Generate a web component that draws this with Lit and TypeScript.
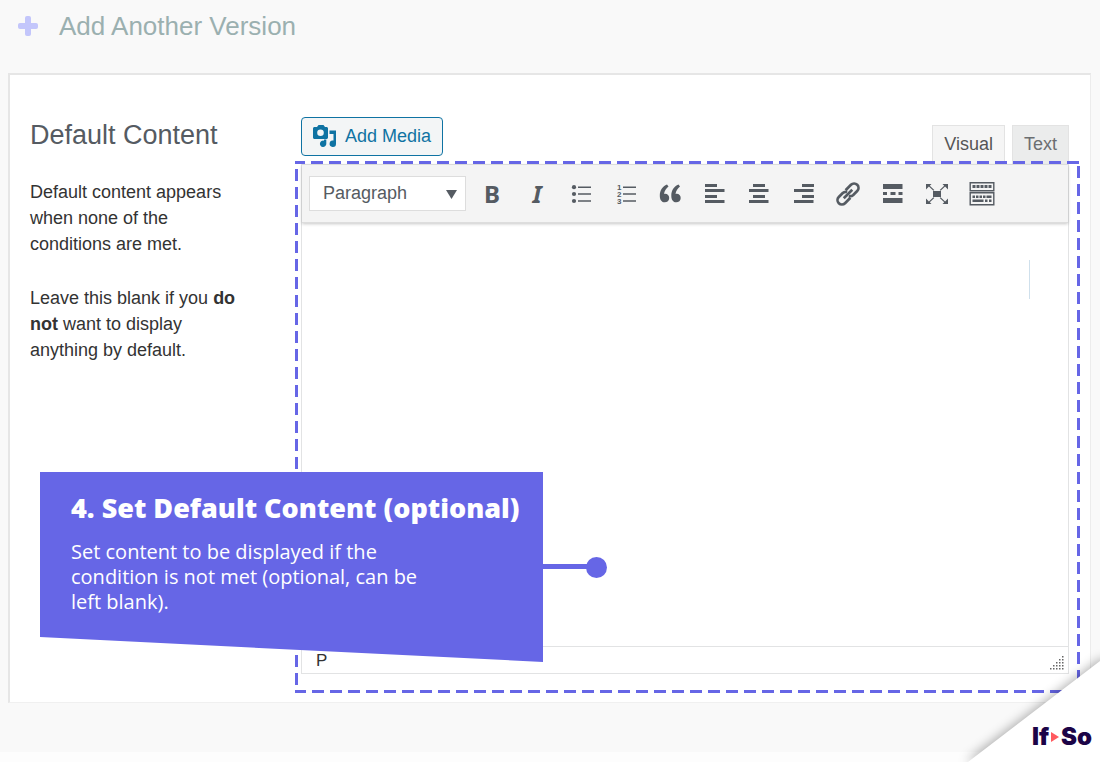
import { LitElement, html, css, svg } from "lit";
import { customElement, state } from "lit/decorators.js";
import { classMap } from "lit/directives/class-map.js";

// Every toolbar icon is drawn around the origin of a 30x30 box.
const alignBars = (shortX: number) => svg`
  <path d="M-10 -5h19.500v3h-19.500zM-10 6h19.500v3h-19.500z"/>
  <rect x=${shortX} y="-10" width="12" height="3"/>
  <rect x=${shortX} y="1" width="12" height="3"/>`;

const lines = svg`<path d="M-3 -7.600h13v1.500h-13zM-3 -.7h13v1.500h-13zM-3 6.300h13v1.500h-13z"/>`;

const quoteMark = svg`<path d="M-1.500 -7.500L-3 -9.500C-7.500 -7.600 -10.200 -3.500 -10.200 1.700C-10.200 5.800 -8.300 8.300 -5.300 8.300C-2.700 8.300 -.8 6.500 -.8 3.900C-.8 1.400 -2.500 -.3 -4.800 -.3C-5.300 -.3 -5.700 -.2 -6 -.1C-5.600 -3.200 -3.700 -5.800 -1.500 -7.500z"/>`;

const arrow = svg`<path d="M-11 -10h5.500l-1.700 1.700 4.500 4.200 -.9 .9 -4.500 -4.300 -2.900 2.900z"/>`;

const tools = [
  { name: "Bold", art: svg`<text class="letter" x="0" y="9" text-anchor="middle">B</text>` },
  { name: "Italic", art: svg`<text class="letter slant" x="0" y="9" text-anchor="middle">I</text>` },
  { name: "Bulleted list", art: svg`<circle cx="-7" cy="-6.800" r="2.100"/><circle cx="-7" cy="0" r="2.100"/><circle cx="-7" cy="7" r="2.100"/>${lines}` },
  { name: "Numbered list", art: svg`<text class="digit" x="-9" y="-4">1</text><text class="digit" x="-9" y="3">2</text><text class="digit" x="-9" y="10">3</text>${lines}` },
  { name: "Blockquote", art: svg`${quoteMark}<g transform="translate(11.500 0)">${quoteMark}</g>` },
  { name: "Align left", art: alignBars(-10) },
  { name: "Align center", art: alignBars(-6) },
  { name: "Align right", art: alignBars(-2) },
  {
    name: "Insert link",
    art: svg`<g transform="rotate(-45)" fill="none" stroke="currentColor" stroke-width="2.700">
      <path d="M-1 4.400H-8.600A4.400 4.400 0 0 1 -8.600 -4.400H-3A4.400 4.400 0 0 1 .8 -2"/>
      <path d="M1 -4.400H8.600A4.400 4.400 0 0 1 8.600 4.400H3A4.400 4.400 0 0 1 -.8 2"/>
      <path d="M-6 0H6"/></g>`,
  },
  { name: "Read more", art: svg`<path d="M-10 -10h19.500v5h-19.500zM-10 4h19.500v5h-19.500zM-10 -2h4v3h-4zM-2.500 -2h5v3h-5zM5.500 -2h4v3h-4z"/>` },
  {
    name: "Fullscreen",
    art: svg`<rect x="-4" y="-3" width="8" height="6"/>${arrow}
      <g transform="scale(-1 1)">${arrow}</g><g transform="scale(1 -1)">${arrow}</g><g transform="scale(-1 -1)">${arrow}</g>`,
  },
  {
    name: "Toolbar toggle",
    art: svg`<path fill="none" stroke="currentColor" stroke-width="1.400" d="M-11.800 -11.300h23.600v8h-23.600zM-11.800 -1.300h23.600v12h-23.600z"/>
      <path d="M-9.500 -9h3v3h-3zM-5.500 -9h3v3h-3zM-1.500 -9h3v3h-3zM2.500 -9h3v3h-3zM6.500 -9h3v3h-3zM-9.500 1.500h2.500v2.500h-2.500zM-6 1.500h2.500v2.500h-2.500zM-2.500 1.500h2.500v2.500h-2.500zM1 1.500h2.500v2.500h-2.500zM4.500 1.500h5v2.500h-5zM-9.500 5.500h11v2.500h-11zM3 5.500h2.500v2.500h-2.500zM7 5.500h2.500v2.500h-2.500z"/>`,
  },
];

@customElement("app-root")
export class AppRoot extends LitElement {
  @state() private mode = "Visual";

  static styles = css`
    :host {
      display: block;
      position: relative;
      min-height: 100vh;
      overflow: hidden;
      background: #fdfdfd;
      color: #333;
      font: 18px/26px "Liberation Sans", Arial, sans-serif;
    }
    * { box-sizing: border-box; }
    button, select, textarea { font: inherit; color: inherit; margin: 0; }
    button { cursor: pointer; }
    svg { display: block; }
    .page { background: #f9f9f9; padding: 0 9px 49px 8px; }
    .add-version {
      display: flex;
      align-items: center;
      gap: 21px;
      padding: 11px 10px 32px;
      border: 0;
      background: none;
      color: #9bb0b0;
      font-size: 26px;
      line-height: 30px;
    }
    .panel {
      position: relative;
      isolation: isolate;
      display: grid;
      grid-template-columns: 271px 1fr;
      padding: 42px 21px 28px 20px;
      background: #fff;
      border: 1px solid #efefef;
      border-width: 2px 1px 1px 2px;
      border-color: #e6e6e6 #ececec #f0f0f0 #e6e6e6;
    }
    h2 { margin: 0 0 25px; color: #555b62; font-size: 27px; line-height: 37px; font-weight: 400; }
    .about { padding-right: 56px; }
    .about p { margin: 0 0 28px; }
    .editor { position: relative; }
    .head { display: flex; align-items: flex-start; justify-content: space-between; }
    .media {
      display: flex;
      align-items: center;
      gap: 8px;
      height: 39px;
      padding: 0 11px 1px 10px;
      border: 1px solid #0f73a3;
      border-radius: 4px;
      background: #f3f5f6;
      color: #0f73a3;
    }
    .tabs { display: flex; gap: 7px; padding-top: 8px; }
    .tab {
      height: 39px;
      padding: 0 11px 2px;
      border: 1px solid #e3e3e3;
      border-bottom: 0;
      background: #ebecec;
      color: #6b6e71;
    }
    .tab.on { background: #f5f5f5; color: #555; }
    .frame { border: 1px solid #e2e3e4; }
    .toolbar {
      position: relative;
      z-index: 1;
      display: flex;
      align-items: center;
      gap: 4px;
      height: 58px;
      padding: 0 7px;
      background: #f4f4f4;
      border-bottom: 1px solid #ddd;
      box-shadow: 0 1px 3px rgba(0, 0, 0, 0.22);
      color: #555b62;
    }
    .format { position: relative; }
    .format select {
      appearance: none;
      display: block;
      width: 157px;
      height: 35px;
      padding: 0 13px 2px;
      border: 1px solid #ddd;
      border-radius: 0;
      background: #fff;
    }
    .format svg { position: absolute; right: 9px; top: 14px; pointer-events: none; }
    .tools { display: grid; grid-template-columns: repeat(12, 1fr); width: 534px; }
    .tool { display: flex; justify-content: center; padding: 0; border: 0; background: none; }
    .tool svg { overflow: visible; }
    .letter { font: 700 24px "Noto Sans", sans-serif; }
    .slant { font-style: italic; }
    .digit { font: 700 8px "Liberation Sans", sans-serif; }
    .body { position: relative; }
    textarea {
      display: block;
      width: 100%;
      min-height: 423px;
      padding: 20px;
      border: 0;
      outline: 0;
      resize: none;
      background: #fff;
    }
    .cursor { position: absolute; right: 38px; top: 37px; width: 1px; height: 39px; background: #cfe0ec; }
    .status {
      display: flex;
      align-items: center;
      justify-content: space-between;
      height: 27px;
      padding: 1px 3px 0 14px;
      border-top: 1px solid #e2e3e4;
      font-size: 17px;
    }
    .dashes {
      position: absolute;
      inset: 44px -11px -19px -6px;
      z-index: 2;
      pointer-events: none;
      --h: linear-gradient(90deg, #6666e6 12px, transparent 12px);
      --v: linear-gradient(#6666e6 12px, transparent 12px);
      background:
        var(--h) -2px 0 / 18px 3px repeat-x,
        var(--h) -1px 100% / 18px 3px repeat-x,
        var(--v) 0 -10px / 3px 18px repeat-y,
        var(--v) 100% -13px / 3px 18px repeat-y;
    }
    .callout { position: absolute; z-index: 3; left: 30px; top: 397px; display: flex; align-items: flex-start; }
    .note {
      width: 503px;
      min-height: 190px;
      padding: 20px 0 48px 31px;
      background: #6666e6;
      clip-path: polygon(0 0, 100% 0, 100% 100%, 0 calc(100% - 25px));
      color: #fff;
    }
    .note h3 { margin: 0 0 15px; font: 800 27px/32px "Open Sans", sans-serif; white-space: nowrap; }
    .note p { margin: 0; width: 360px; font: 20px/25px "Open Sans", sans-serif; }
    .pointer { margin-top: 85px; }
    .corner { position: absolute; right: 0; bottom: 0; pointer-events: none; }
    .brand {
      position: absolute;
      right: 8px;
      bottom: 10px;
      display: flex;
      align-items: center;
      gap: 2px;
      color: #1c0447;
      font: 900 24px/30px Inter, sans-serif;
      text-decoration: none;
    }
  `;

  render() {
    return html`
      <main class="page">
        <button class="add-version" type="button">
          <svg width="20" height="20" viewBox="0 0 20 20" fill="#c3c6fb"><rect x="7" width="6" height="20" rx="2"/><rect y="7" width="20" height="6" rx="2"/></svg>
          Add Another Version
        </button>
        <section class="panel">
          <div class="about">
            <h2>Default Content</h2>
            <p>Default content appears when none of the conditions are met.</p>
            <p>Leave this blank if you <strong>do not</strong> want to display anything by default.</p>
          </div>
          <div class="editor">
            <div class="head">
              <button class="media" type="button">
                <svg width="25" height="24" viewBox="0 0 25 24" fill="currentColor">
                  <path fill-rule="evenodd" d="M2.500 3H5l1.500-2h5L13 3h1.500c.8 0 1.500.7 1.500 1.500v9c0 .8-.7 1.500-1.500 1.500h-12C1.700 15 1 14.300 1 13.500v-9C1 3.700 1.700 3 2.500 3zM8.500 5.500a3.300 3.300 0 1 0 0 6.600 3.300 3.300 0 0 0 0-6.600z"/>
                  <path d="M17.500 6.500H24v13.200a3.200 3.200 0 1 1-2.500-3.100V10h-4z"/>
                  <path d="M12 15.500h2.300v4.200a3.200 3.200 0 1 1-2.300-3z"/>
                </svg>
                Add Media
              </button>
              <div class="tabs" role="tablist">
                ${["Visual", "Text"].map(
                  (t) => html`<button type="button" role="tab" aria-selected=${this.mode === t}
                    class=${classMap({ tab: true, on: this.mode === t })}
                    @click=${() => (this.mode = t)}>${t}</button>`
                )}
              </div>
            </div>
            <div class="frame">
              <div class="toolbar">
                <div class="format">
                  <select aria-label="Text format"><option>Paragraph</option></select>
                  <svg width="11" height="9" viewBox="0 0 11 9" fill="currentColor"><path d="M0 0h11L5.500 9z"/></svg>
                </div>
                <div class="tools">
                  ${tools.map(
                    (t) => html`<button class="tool" type="button" aria-label=${t.name}>
                      <svg width="30" height="30" viewBox="-15 -15 30 30" fill="currentColor">${t.art}</svg>
                    </button>`
                  )}
                </div>
              </div>
              <div class="body">
                <textarea aria-label="Default content"></textarea>
                <span class="cursor"></span>
              </div>
              <div class="status">
                <span>P</span>
                <svg width="15" height="18" viewBox="0 0 15 18" fill="#666">
                  ${[0, 1, 2, 3, 4].map((row) =>
                    Array.from({ length: row + 1 }, (_, i) => svg`<rect x=${12 - i * 3} y=${4 + row * 3} width="1.500" height="1.500"/>`)
                  )}
                </svg>
              </div>
            </div>
            <div class="dashes"></div>
          </div>
          <aside class="callout">
            <div class="note">
              <h3>4. Set Default Content (optional)</h3>
              <p>Set content to be displayed if the condition is not met (optional, can be left blank).</p>
            </div>
            <svg class="pointer" width="65" height="22" viewBox="0 0 65 22" fill="#6666e6"><path d="M0 7h50v5H0z"/><circle cx="53.500" cy="10.500" r="10.500"/></svg>
          </aside>
        </section>
      </main>
      <svg class="corner" width="160" height="130" viewBox="0 0 160 130">
        <defs><filter id="soft" x="-20%" y="-20%" width="140%" height="140%"><feGaussianBlur stdDeviation="6"/></filter></defs>
        <path d="M160 28L26 130H200V28z" fill="#000" opacity=".34" filter="url(#soft)"/>
        <path d="M160 29L28 130H160z" fill="#fff"/>
      </svg>
      <a class="brand" href="#">If<svg width="8" height="10" viewBox="0 0 8 10" fill="#ff5a5f"><path d="M0 0L8 5L0 10z"/></svg>So</a>
    `;
  }
}
